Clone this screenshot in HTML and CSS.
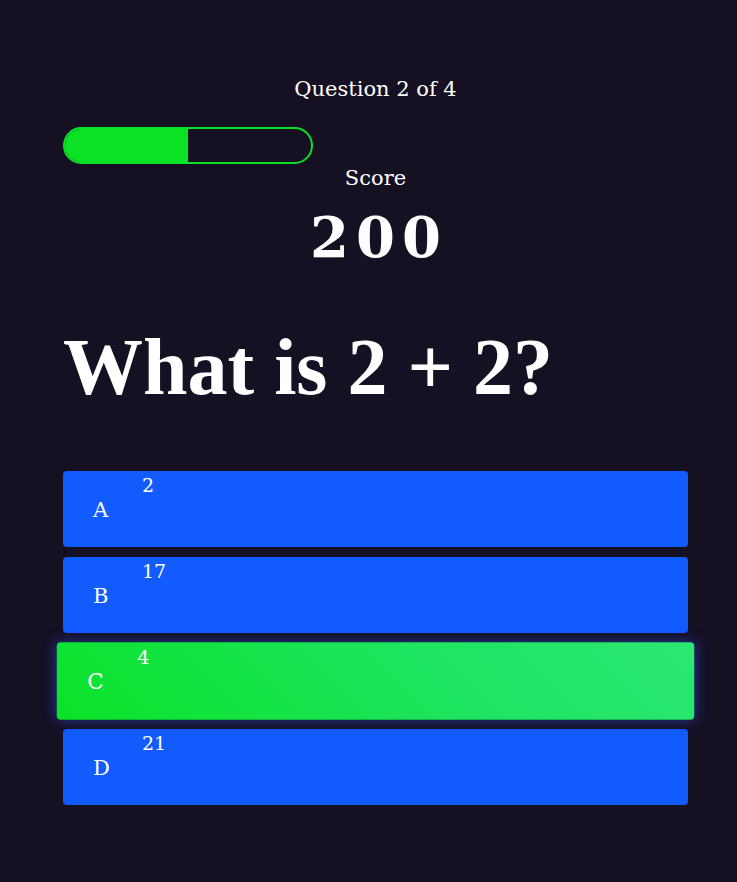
FILE: index.html
```html
<!DOCTYPE html>
<html lang="en">
<head>
<meta charset="utf-8">
<title>Quiz</title>
<link rel="stylesheet" href="styles.css">
</head>
<body>
<main class="quiz">
  <header class="status">
    <p class="question-count">Question 2 of 4</p>
    <div class="progress"><div class="progress-fill" style="width: 50%"></div></div>
    <p class="score-label">Score</p>
    <p class="score-value">200</p>
  </header>
  <h1 class="question">What is 2 + 2?</h1>
  <div class="answers">
    <button class="answer"><span class="answer-letter">A</span><span class="answer-text">2</span></button>
    <button class="answer"><span class="answer-letter">B</span><span class="answer-text">17</span></button>
    <button class="answer answer-correct"><span class="answer-letter">C</span><span class="answer-text">4</span></button>
    <button class="answer"><span class="answer-letter">D</span><span class="answer-text">21</span></button>
  </div>
</main>
</body>
</html>
```
FILE: styles.css
```css
html, body {
  margin: 0;
  padding: 0;
  background: #161023;
}
body {
  font-family: "DejaVu Serif", Georgia, serif;
  color: #ffffff;
  min-height: 882px;
}
.quiz {
  width: 625px;
  margin-left: 63px;
  padding-top: 77px;
}
.status p {
  margin: 0;
}
.question-count {
  text-align: center;
  font-size: 21px;
  line-height: 24px;
}
.progress {
  margin-top: 26px;
  width: 250px;
  height: 37px;
  box-sizing: border-box;
  border: 2px solid #0be125;
  border-radius: 19px;
  overflow: hidden;
  display: flex;
}
.progress-fill {
  background: #0be125;
  height: 100%;
}
.score-label {
  margin-top: 2px !important;
  text-align: center;
  font-size: 21px;
  line-height: 24px;
}
.score-value {
  margin-top: 17px !important;
  text-align: center;
  font-size: 56px;
  line-height: 60px;
  font-weight: bold;
  letter-spacing: 7px;
  padding-left: 7px;
}
.question {
  margin: 55px 0 0;
  font-family: "Liberation Serif", "Times New Roman", serif;
  font-size: 80px;
  line-height: 90px;
  font-weight: bold;
}
.answers {
  margin-top: 59px;
  display: flex;
  flex-direction: column;
  gap: 10px;
}
.answer {
  display: flex;
  align-items: flex-start;
  height: 76px;
  padding: 0 0 0 30px;
  border: none;
  border-radius: 4px;
  background: #125bff;
  color: #ffffff;
  font-family: inherit;
  text-align: left;
  cursor: pointer;
}
.answer-letter {
  width: 49px;
  margin-top: 27px;
  font-size: 21px;
  line-height: 24px;
}
.answer-text {
  margin-top: 2px;
  font-size: 19px;
  line-height: 24px;
}
.answer-correct {
  background: linear-gradient(45deg, #0ae328 0%, #1ee462 60%, #2ae873 100%);
  transform: scale(1.02);
  box-shadow: 0 0 12px rgba(40, 90, 255, 0.55);
}
```
